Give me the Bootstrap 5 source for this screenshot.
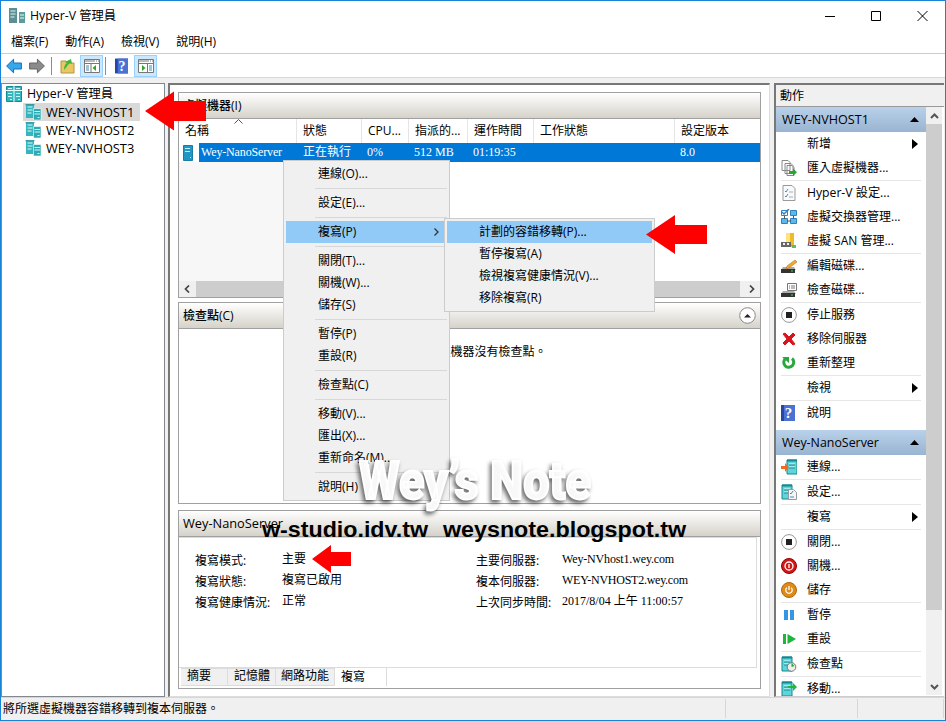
<!DOCTYPE html>
<html lang="zh-Hant">
<head>
<meta charset="utf-8">
<title>Hyper-V 管理員</title>
<link href="https://cdn.jsdelivr.net/npm/bootstrap@5.3.0/dist/css/bootstrap.min.css" rel="stylesheet">
<style>
body{width:946px;height:721px;font:12px/18px "Open Sans","Noto Sans CJK TC",sans-serif;color:#000;background:#f0f0f0}
svg{display:block;flex:none}
.win{width:946px;height:721px;border:1px solid #1883d7;background:#f0f0f0}
.lat{font-size:12.6px}
.titlebar{height:30px;padding:0 13px 0 8px}
.menus{height:22px;gap:17px;padding-left:10px}
.tools{height:25px;background:#fff;border-top:1px solid #ccc;border-bottom:1px solid #d8d8d8;padding-left:5px}
.tbtn{width:23px;height:22px;background:#cce8ff;border:1px solid #99d1ff}
.tsep{width:1px;height:18px;background:#8d8d8d}
.panes{height:614px;margin-top:5px}
.tree{width:164px;border:1px solid #828790;margin-right:3px;padding-top:1px}
.tree .trow{height:18px;padding-left:4px}
.tree .kid{margin-left:21px;width:117px;padding-left:2px;font-size:12.8px}
.tree .sel{background:#d9d9d9}
.center{width:602px;border:2px solid #777;border-right:1px solid #ddd;border-bottom:1px solid #ddd;padding:7px 7px 0 8px}
.pane{border:1px solid #a0a0a0;background:#fff;width:583px}
.phead{height:26px;background:linear-gradient(#fff,#d5d2c9);border-bottom:1px solid #a0a0a0;padding:0 4px;font-weight:500}
.cols>div{height:24px;border-right:1px solid #e5e5e5;padding:3px 0 0 6px;white-space:nowrap}
.vmrow{height:19px;background:#0078d7;color:#fff}
.pix{font-family:"Liberation Serif","Noto Sans CJK TC",serif;white-space:nowrap}
.c1{width:118px}.c2{width:65px}.c3{width:47px}.c4{width:59px}.c5{width:66px}.c6{width:141px}
.hbar{height:16px;background:#f0f0f0;padding:0 5px}
.thumb{background:#cdcdcd}
.hthumb{margin:0 9px 0 6px}
.actions{width:170px;margin-left:4px;background:#fff;border:2px solid #777;border-right:0;border-bottom:1px solid #ccc}
.acthead{height:21px;background:#f0f0f0;padding-left:4px}
.group{height:25px;background:linear-gradient(#b9d1ea,#99b4d1);padding:0 7px 0 6px}
.act{height:24px;padding-left:5px}
.act svg{width:16px;height:16px;margin-right:10px}
.act span{flex:1}
.act .arrow{width:6px;height:10px;margin-right:8px}
.act .blank{margin-left:26px}
.line{height:1px;background:#e6e6e6;margin:0 5px}
.status{height:22px;border-top:1px solid #d7d7d7;padding-left:2px}
.det{width:578px;height:131px;border:1px solid #dcdcdc;border-left:0;padding:12px 0 0 16px}
.tabx{height:18px;padding:0 6px;background:#f0f0f0;border:1px solid #dcdcdc;border-left:0;line-height:15px}
.menu{position:absolute;background:#f0f0f0;border:1px solid #ccc;padding:2px}
.menu .mi{height:22px;padding:0 8px 0 32px}
.menu .hot{background:#91c9f7}
.menu hr{margin:3px 0 3px 29px;height:1px;background:#d7d7d7;border:0;opacity:1}
.overlay{position:absolute;left:-1px;top:-1px;pointer-events:none}
.glow{filter:drop-shadow(-2px 3px 2px #0009)}
.sortmark{position:absolute;left:55px;top:0}
</style>
</head>
<body>
<svg width="0" height="0" class="d-none">
<symbol id="srv" viewBox="0 0 16 16"><path d="M.500 1h8v4h-8zM.500 5h8v9h-8z" fill="#35b5bd"/><path d="M0 .7h9" stroke="#168a93"/><path d="M2 3h5M2 6h5M2 9h4" stroke="#d8ffff"/><path d="M8 4.500h7.500V16H8z" fill="#2fa9b2" stroke="#fff" stroke-width=".6"/><path d="M9 7.500h5.500M9 10h5.500M12 13.500h2" stroke="#c4fcff"/></symbol>
<symbol id="one" viewBox="0 0 16 16"><path d="M1 1h10v14H1z" fill="#5dd5da" stroke="#16888f"/><path d="M1 1.500h10" stroke="#16888f" stroke-width="2"/><path d="M3 5h6M3 8h6" stroke="#dff" /><path d="M3 6h6M3 9h6" stroke="#16888f"/></symbol>
<symbol id="root" viewBox="0 0 16 16"><path d="M.5.5h15v15H.5z" fill="#35b5bd" stroke="#168a93"/><path d="M8 0v16M0 4.500h16" stroke="#e8ffff"/><path d="M2 2.500h4M10 2.500h4M2 7.500h4M10 7.500h4M2 10.500h4M10 10.500h4M4 13.500h2M12 13.500h2" stroke="#c4fcff"/></symbol>
<symbol id="help" viewBox="0 0 14 16"><path d="M0 0h14v16H0z" fill="#2747a8"/><path d="M3 0h11v16H3z" fill="#4a72d3"/><text x="7.500" y="13" font-family="Liberation Serif" font-weight="bold" font-size="15" text-anchor="middle" fill="#fff">?</text></symbol>
<symbol id="tri" viewBox="0 0 6 10"><path d="M0 0v10l6-5z"/></symbol>
<symbol id="stop" viewBox="0 0 16 16"><circle cx="8" cy="8" r="7.400" fill="#fff" stroke="#999"/><path d="M5 5h6v6H5z" fill="#222"/></symbol>
<symbol id="disk" viewBox="0 0 16 16"><path d="M2 9h11l2 3H0z" fill="#aaa"/><path d="M0 11h14v4H0z" fill="#333"/><path d="M10 13h2" stroke="#3e3"/></symbol>
</svg>
<div class="win position-relative overflow-hidden">
<div class="bg-white">
 <div class="titlebar d-flex align-items-center">
  <svg width="17" height="16" viewBox="0 0 17 16"><path d="M0 0h8v15H0z" fill="#5e8e93"/><path d="M1.500 3h5M1.500 6h5M1.500 9h4" stroke="#cfe"/><path d="M10 4h6v11h-6z" fill="#5e9b9b"/><path d="M11 7h4M11 10h4M8.500 3v12" stroke="#dff"/></svg>
  <span class="ms-1" style="font-size:12.300px">Hyper-V 管理員</span>
  <svg class="ms-auto" width="112" height="12" viewBox="0 0 112 12" fill="none" stroke="#000"><path d="M5 6.500h10M51.500 1.500h9v9h-9zM97.500 1l10 10M107.500 1l-10 10"/></svg>
 </div>
 <div class="menus d-flex align-items-center"><span>檔案(F)</span><span>動作(A)</span><span>檢視(V)</span><span>說明(H)</span></div>
 <div class="tools d-flex align-items-center">
  <svg width="16" height="16" viewBox="0 0 16 16"><path d="M.6 8l7-6.800v3.800h7.800v6H7.600v3.800z" fill="#36a9ee" stroke="#1a6db0"/></svg>
  <svg style="margin-left:7px" width="16" height="16" viewBox="0 0 16 16"><path d="M15.400 8l-7-6.800v3.800H.6v6h7.800v3.800z" fill="#8b8b8b" stroke="#666"/></svg>
  <div class="tsep" style="margin:0 4px 0 6px"></div>
  <svg class="ms-1" width="16" height="16" viewBox="0 0 16 16"><path d="M1 3h5l1 2h7v10H1z" fill="#e9c766" stroke="#b9943c"/><path d="M4 12c0-4 1-6 3-7l-2-1 6-3 1 5-2-1c-3 2-3 4-6 7" fill="#3db838"/></svg>
  <div class="tbtn ms-1 d-flex align-items-center justify-content-center"><svg width="16" height="14" viewBox="0 0 16 14"><path d="M.5.500h15v13H.5z" fill="#fff" stroke="#777"/><path d="M0 2h11M12 2h1M14 2h1M.5 4.500h15M7 5v8" stroke="#777"/><path d="M2 7h3M2 9h3M2 11h3" stroke="#48a"/><path d="M12 6v6L8.500 9z" fill="#2ca52c"/></svg></div>
  <div class="tsep" style="margin:0 5px 0 2px"></div>
  <svg class="ms-1" width="13" height="16"><use href="#help"/></svg>
  <div class="tbtn d-flex align-items-center justify-content-center" style="margin-left:6px"><svg width="16" height="14" viewBox="0 0 16 14"><path d="M.5.500h15v13H.5z" fill="#fff" stroke="#777"/><path d="M0 2h11M12 2h1M14 2h1M.5 4.500h15M9.500 5v8" stroke="#777"/><path d="M11 7h3M11 9h3M11 11h3" stroke="#48a"/><path d="M4 6v6l3.500-3z" fill="#2ca52c"/></svg></div>
 </div>
</div>
<div class="panes d-flex">
 <div class="tree bg-white lat">
  <div class="trow d-flex align-items-center"><svg width="16" height="16" style="margin-right:5px"><use href="#root"/></svg><span style="font-size:12.300px">Hyper-V 管理員</span></div>
  <div class="trow kid sel d-flex align-items-center"><svg class="me-1" width="17" height="16"><use href="#srv"/></svg>WEY-NVHOST1</div>
  <div class="trow kid d-flex align-items-center"><svg class="me-1" width="17" height="16"><use href="#srv"/></svg>WEY-NVHOST2</div>
  <div class="trow kid d-flex align-items-center"><svg class="me-1" width="17" height="16"><use href="#srv"/></svg>WEY-NVHOST3</div>
 </div>
 <div class="center bg-white">
  <div class="pane d-flex flex-column" style="height:206px">
   <div class="phead d-flex align-items-center">虛擬機器(I)</div>
   <div class="cols d-flex position-relative"><div class="c1">名稱</div><div class="c2">狀態</div><div class="c3">CPU...</div><div class="c4">指派的...</div><div class="c5">運作時間</div><div class="c6">工作狀態</div><div class="border-0">設定版本</div>
    <svg class="sortmark" width="9" height="5"><path d="M.5 4.500l4-4 4 4" fill="none" stroke="#555"/></svg></div>
   <div class="vmrow pix d-flex">
    <div class="c1 d-flex"><div class="bg-white ps-1" style="width:20px;padding-top:2px"><svg width="10" height="16" viewBox="0 0 10 16"><path d="M.5.500h9v15h-9z" fill="#2496c4" stroke="#1a7da8"/><path d="M2 3.500h5M2 6.500h5M7 12.500h1" stroke="#bfeeff"/></svg></div><span style="padding-left:2px;letter-spacing:-.15px">Wey-NanoServer</span></div>
    <div class="c2" style="padding-left:6px">正在執行</div><div class="c3" style="padding-left:5px">0%</div><div class="c4" style="padding-left:5px">512 MB</div><div class="c5" style="padding-left:5px">01:19:35</div><div class="c6"></div><div style="padding-left:5px">8.0</div>
   </div>
   <div class="flex-fill"><div class="c1 h-100" style="background:#f7f7f7"></div></div>
   <div class="hbar d-flex align-items-center">
    <svg width="6" height="8"><path d="M5 .5L1.500 4 5 7.500" fill="none" stroke="#444" stroke-width="1.700"/></svg>
    <div class="thumb hthumb h-100 flex-fill"></div>
    <svg width="6" height="8"><path d="M1 .5L4.500 4 1 7.500" fill="none" stroke="#444" stroke-width="1.700"/></svg>
   </div>
  </div>
  <div class="pane" style="height:202px;margin-top:4px">
   <div class="phead d-flex align-items-center justify-content-between">檢查點(C)<svg width="17" height="17"><circle cx="8.500" cy="8.500" r="7.800" fill="#fff" stroke="#888"/><path d="M5 10.500h7L8.500 7z" fill="#222"/></svg></div>
   <div class="text-center pix" style="padding:14px 2px 0 0">選取的虛擬機器沒有檢查點。</div>
  </div>
  <div class="pane" style="height:179px;margin-top:6px">
   <div class="phead d-flex align-items-center" style="padding-bottom:2px;font-size:12.800px;font-weight:400">Wey-NanoServer</div>
   <div class="det d-flex">
    <div style="width:87px;line-height:21px">複寫模式:<br>複寫狀態:<br>複寫健康情況:</div>
    <div class="pix" style="width:194px;line-height:21px;margin-top:-1px">主要<br>複寫已啟用<br>正常</div>
    <div style="width:86px;line-height:21px">主要伺服器:<br>複本伺服器:<br>上次同步時間:</div>
    <div class="pix" style="line-height:21px;margin-top:-1px"><span style="letter-spacing:-.15px">Wey-NVhost1.wey.com<br><span style="letter-spacing:-.25px">WEY-NVHOST2.wey.com</span></span><br>2017/8/04 上午 11:00:57</div>
   </div>
   <div class="d-flex pix" style="padding-left:2px"><div class="tabx" style="width:47px">摘要</div><div class="tabx" style="width:48px">記憶體</div><div class="tabx" style="width:59px;padding-left:5px">網路功能</div><div class="tabx bg-white border-top-0 border-bottom-0" style="width:52px;line-height:19px">複寫</div></div>
  </div>
 </div>
 <div class="actions overflow-hidden">
  <div class="acthead d-flex align-items-center">動作</div>
  <div class="d-flex" style="border-top:1px solid #999">
   <div style="width:150px;height:590px" class="overflow-hidden">
    <div class="group lat d-flex align-items-center justify-content-between">WEY-NVHOST1<svg width="9" height="5"><path d="M0 5h9L4.500 0z"/></svg></div>
    <div class="act d-flex align-items-center"><span class="blank">新增</span><svg class="arrow"><use href="#tri"/></svg></div>
    <div class="act d-flex align-items-center"><svg viewBox="0 0 16 16"><path d="M1 .5h6l2 2v8H1zM4 3.500h6l2 2v8H4zM6 5.500h5l2 2v8H6z" fill="#fff" stroke="#888"/><path d="M8 11h4V8.500l4 3.700-4 3.500V14H8z" fill="#23a834"/></svg>匯入虛擬機器...</div>
    <div class="line"></div>
    <div class="act d-flex align-items-center"><svg viewBox="0 0 16 16"><path d="M2 .5h9l3 3v12H2z" fill="#fafafa" stroke="#999"/><path d="M4 6l1 1 2-3M4 11l1 1 2-3" fill="none" stroke="#3b8fd0"/><path d="M8 7h4M8 12h4" stroke="#aaa"/></svg><span style="font-size:12.200px">Hyper-V 設定...</span></div>
    <div class="act d-flex align-items-center"><svg viewBox="0 0 16 16"><path d="M9.500 1.500h6v5h-6zM.5 9.500h6v5h-6zM9.500 9.500h6v5h-6z" fill="#5bb7ee" stroke="#2e83bd"/><path d="M.5 1.500h6v5h-6z" fill="#fff" stroke="#2e83bd"/><path d="M1 3l2 2 5-5" fill="none" stroke="#2e83bd" stroke-width="1.500"/><path d="M3.500 7v3M12.500 7v3M6 12h4" stroke="#555"/></svg>虛擬交換器管理...</div>
    <div class="act d-flex align-items-center"><svg viewBox="0 0 16 16"><path d="M5 0h8v13H5z" fill="#eebd26"/><path d="M5 0h4v10H5z" fill="#ffe37c"/><path d="M0 9h10v5H0z" fill="#666"/><path d="M2 10h2v2H2zM6 10h2v2H6z" fill="#eee"/><path d="M10 12h5v3h-4z" fill="#63bd58"/></svg>虛擬 SAN 管理...</div>
    <div class="line"></div>
    <div class="act d-flex align-items-center"><svg viewBox="0 0 16 16"><use href="#disk"/><path d="M5 11l1-3 8-6 2 2-8 6z" fill="#efaa31" stroke="#a96717" stroke-width=".5"/></svg>編輯磁碟...</div>
    <div class="act d-flex align-items-center"><svg viewBox="0 0 16 16"><use href="#disk"/><path d="M6.500 1.500h9v7h-9z" fill="#fff" stroke="#777"/><path d="M8 4h1M10 4h4M8 6h1M10 6h4" stroke="#777"/></svg>檢查磁碟...</div>
    <div class="line"></div>
    <div class="act d-flex align-items-center"><svg><use href="#stop"/></svg>停止服務</div>
    <div class="act d-flex align-items-center"><svg viewBox="0 0 16 16"><path d="M2 3l2-1 4 4 4-4 2 2-4 4 4 5-2 1-4-4-4 4-2-2 4-4z" fill="#d8141c" stroke="#d8141c"/></svg>移除伺服器</div>
    <div class="act d-flex align-items-center"><svg viewBox="0 0 16 16"><path d="M4 4a5 5 0 1 0 7-.5" fill="none" stroke="#28a83b" stroke-width="3"/><path d="M1 2h7v6z" fill="#28a83b"/></svg>重新整理</div>
    <div class="line"></div>
    <div class="act d-flex align-items-center"><span class="blank">檢視</span><svg class="arrow"><use href="#tri"/></svg></div>
    <div class="line"></div>
    <div class="act d-flex align-items-center"><svg viewBox="0 0 16 16"><use href="#help" width="14" height="16"/></svg>說明</div>
    <div class="group d-flex align-items-center justify-content-between" style="margin-top:5px;font-size:12.400px">Wey-NanoServer<svg width="9" height="5"><path d="M0 5h9L4.500 0z"/></svg></div>
    <div class="act d-flex align-items-center"><svg viewBox="0 0 16 16"><use href="#one" x="5" width="16" height="16"/><path d="M0 7h4V4l4 4.500L4 13v-3H0z" fill="#f36a22"/></svg>連線...</div>
    <div class="line"></div>
    <div class="act d-flex align-items-center"><svg viewBox="0 0 16 16"><use href="#one" width="16" height="16"/><path d="M7.500 5.500h5l3 3v7h-8z" fill="#f5f5f5" stroke="#999"/><path d="M9 9l1 1 2-3M9 13h4" fill="none" stroke="#3b8fd0"/></svg>設定...</div>
    <div class="line"></div>
    <div class="act d-flex align-items-center"><span class="blank">複寫</span><svg class="arrow"><use href="#tri"/></svg></div>
    <div class="line"></div>
    <div class="act d-flex align-items-center"><svg><use href="#stop"/></svg>關閉...</div>
    <div class="act d-flex align-items-center"><svg viewBox="0 0 16 16"><circle cx="8" cy="8" r="7.500" fill="#d01818" stroke="#900"/><circle cx="8" cy="8" r="4" fill="none" stroke="#fff" stroke-width="1.300"/><path d="M8 6v4" stroke="#fff" stroke-width="1.300"/></svg>關機...</div>
    <div class="act d-flex align-items-center"><svg viewBox="0 0 16 16"><circle cx="8" cy="8" r="7.500" fill="#e08a18" stroke="#b06808"/><path d="M5.800 5.800a3.200 3.200 0 1 0 4.400 0M8 4v4" fill="none" stroke="#fff" stroke-width="1.300"/></svg>儲存</div>
    <div class="line"></div>
    <div class="act d-flex align-items-center"><svg viewBox="0 0 16 16"><path d="M3 3h4v10H3zM9 3h4v10H9z" fill="#3596e4"/></svg>暫停</div>
    <div class="act d-flex align-items-center"><svg viewBox="0 0 16 16"><path d="M2 3h3v10H2zM6.500 3v10L15 8z" fill="#1db53a"/></svg>重設</div>
    <div class="line"></div>
    <div class="act d-flex align-items-center"><svg viewBox="0 0 16 16"><use href="#one" width="16" height="16"/><circle cx="10.500" cy="11" r="4.300" fill="#eee" stroke="#777"/><path d="M10.500 11V7l3 3z" fill="#2a3"/></svg>檢查點</div>
    <div class="line"></div>
    <div class="act d-flex align-items-center"><svg viewBox="0 0 16 16"><use href="#one" width="16" height="16"/><path d="M7 5h5V2l4 4-4 4V7H7z" fill="#22b83c"/></svg>移動...</div>
   </div>
   <div class="d-flex flex-column align-items-center" style="width:16px;height:588px;background:#f0f0f0">
    <svg width="9" height="17"><path d="M1 11l3.500-3.500L8 11" fill="none" stroke="#555" stroke-width="2"/></svg>
    <div class="thumb w-100" style="height:486px"></div>
    <svg class="mt-auto" width="9" height="17"><path d="M1 7l3.500 3.500L8 7" fill="none" stroke="#555" stroke-width="2"/></svg>
   </div>
  </div>
 </div>
</div>
<div class="status d-flex align-items-center pix">將所選虛擬機器容錯移轉到複本伺服器。<div class="ms-auto" style="width:133px;height:19px;border-left:1px solid #d7d7d7;border-right:1px solid #d7d7d7"></div><div style="width:86px;height:19px;border-right:1px solid #d7d7d7;margin-right:1px"></div></div>

<div class="menu" style="left:282px;top:159px;width:167px;height:341px">
 <div class="mi d-flex align-items-center">連線(O)...</div><hr>
 <div class="mi d-flex align-items-center">設定(E)...</div><hr>
 <div class="mi hot d-flex align-items-center justify-content-between">複寫(P)<svg width="5" height="8"><path d="M.5.500L4 4 .5 7.500" fill="none" stroke="#333" stroke-width="1.300"/></svg></div><hr>
 <div class="mi d-flex align-items-center">關閉(T)...</div>
 <div class="mi d-flex align-items-center">關機(W)...</div>
 <div class="mi d-flex align-items-center">儲存(S)</div><hr>
 <div class="mi d-flex align-items-center">暫停(P)</div>
 <div class="mi d-flex align-items-center">重設(R)</div><hr>
 <div class="mi d-flex align-items-center">檢查點(C)</div><hr>
 <div class="mi d-flex align-items-center">移動(V)...</div>
 <div class="mi d-flex align-items-center">匯出(X)...</div>
 <div class="mi d-flex align-items-center">重新命名(M)...</div><hr>
 <div class="mi d-flex align-items-center">說明(H)</div>
</div>
<div class="menu" style="left:443px;top:217px;width:211px;height:94px">
 <div class="mi hot d-flex align-items-center">計劃的容錯移轉(P)...</div>
 <div class="mi d-flex align-items-center">暫停複寫(A)</div>
 <div class="mi d-flex align-items-center">檢視複寫健康情況(V)...</div>
 <div class="mi d-flex align-items-center">移除複寫(R)</div>
</div>
<svg class="overlay" width="946" height="721">
 <g fill="#f00"><path d="M145 111l29-19.500V101h32v20h-32v9.500z"/><path d="M646 234.500l29-19.500v10h32v19h-32v10z"/><path d="M312 559l19-14v7h20v14h-20v7z"/></g>
 <text x="359" y="499" font-family="Roboto" font-weight="900" font-size="54" textLength="232" lengthAdjust="spacingAndGlyphs" fill="#fff" fill-opacity=".95" stroke="#fff" stroke-width="2" class="glow">Wey’s Note</text>
 <g font-family="Liberation Sans" font-weight="bold">
  <text x="262" y="537" font-size="22.500" textLength="166" lengthAdjust="spacingAndGlyphs">w-studio.idv.tw</text>
  <text x="443" y="537" font-size="22.500" textLength="243" lengthAdjust="spacingAndGlyphs">weysnote.blogspot.tw</text>
 </g>
</svg>
</div>
<script src="https://cdn.jsdelivr.net/npm/bootstrap@5.3.0/dist/js/bootstrap.bundle.min.js"></script>
</body>
</html>
